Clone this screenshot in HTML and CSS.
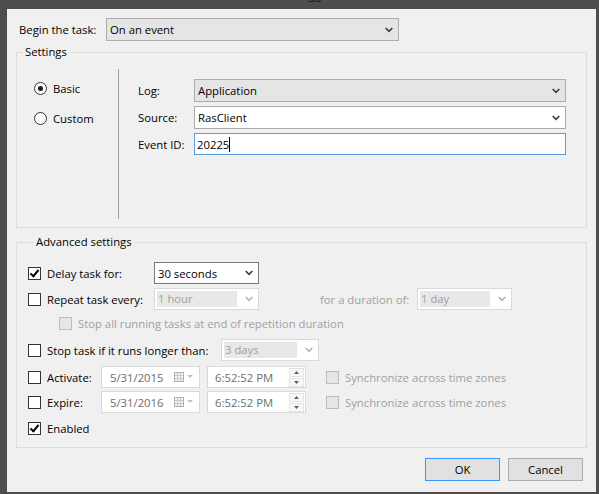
FILE: index.html
```html
<!DOCTYPE html>
<html>
<head>
    <meta charset="utf-8">
    <link rel="stylesheet" href="styles.css">
</head>
<body>
<div class="window">
    <div class="titlebar"><span class="title">Edit Trigger</span></div>

    <div class="dialog">
        <div class="begin_row">
            <span class="begin_label">Begin the task:</span>
            <div class="dropdown grey begin_select">
                <span>On an event</span>
                <svg class="chevron" width="8" height="6" viewBox="0 0 8 6"><path d="M0.7 1 L4 4.3 L7.3 1" /></svg>
            </div>
        </div>

        <!-- Settings group -->
        <fieldset class="group settings">
            <legend>Settings</legend>
            <div class="settings_body">
                <div class="radios">
                    <div class="radio_row"><span class="radio checked"></span>Basic</div>
                    <div class="radio_row"><span class="radio"></span>Custom</div>
                </div>
                <div class="separator"></div>
                <div class="fields">
                    <div class="field_row">
                        <span class="field_label">Log:</span>
                        <div class="dropdown grey field_control">
                            <span>Application</span>
                            <svg class="chevron" width="8" height="6" viewBox="0 0 8 6"><path d="M0.7 1 L4 4.3 L7.3 1" /></svg>
                        </div>
                    </div>
                    <div class="field_row">
                        <span class="field_label">Source:</span>
                        <div class="dropdown field_control">
                            <span>RasClient</span>
                            <svg class="chevron" width="8" height="6" viewBox="0 0 8 6"><path d="M0.7 1 L4 4.3 L7.3 1" /></svg>
                        </div>
                    </div>
                    <div class="field_row short">
                        <span class="field_label">Event ID:</span>
                        <div class="textbox field_control focused"><span>20225</span><span class="caret"></span></div>
                    </div>
                </div>
            </div>
        </fieldset>

        <!-- Advanced settings group -->
        <fieldset class="group advanced">
            <legend>Advanced settings</legend>

            <div class="adv_row">
                <span class="check checked"></span>
                <span class="adv_label">Delay task for:</span>
                <div class="dropdown active_select small_select">
                    <span>30 seconds</span>
                    <svg class="chevron" width="8" height="6" viewBox="0 0 8 6"><path d="M0.7 1 L4 4.3 L7.3 1" /></svg>
                </div>
            </div>

            <div class="adv_row">
                <span class="check"></span>
                <span class="adv_label">Repeat task every:</span>
                <div class="dropdown disabled small_select">
                    <span class="value_box">1 hour</span>
                    <svg class="chevron" width="8" height="6" viewBox="0 0 8 6"><path d="M0.7 1 L4 4.3 L7.3 1" /></svg>
                </div>
                <span class="muted duration_label">for a duration of:</span>
                <div class="dropdown disabled duration_select">
                    <span class="value_box">1 day</span>
                    <svg class="chevron" width="8" height="6" viewBox="0 0 8 6"><path d="M0.7 1 L4 4.3 L7.3 1" /></svg>
                </div>
            </div>

            <div class="adv_row sub_row">
                <span class="check off"></span>
                <span class="muted">Stop all running tasks at end of repetition duration</span>
            </div>

            <div class="adv_row gap5">
                <span class="check"></span>
                <span class="adv_label long_label">Stop task if it runs longer than:</span>
                <div class="dropdown disabled stop_select">
                    <span class="value_box">3 days</span>
                    <svg class="chevron" width="8" height="6" viewBox="0 0 8 6"><path d="M0.7 1 L4 4.3 L7.3 1" /></svg>
                </div>
            </div>

            <div class="adv_row gap5">
                <span class="check"></span>
                <span class="adv_label date_label">Activate:</span>
                <div class="picker date_picker">
                    <span>5/31/2015</span>
                    <span class="cal_icon"></span>
                    <svg class="cal_arrow" width="6" height="4" viewBox="0 0 6 4"><path d="M0 0 H6 L3 3 Z" /></svg>
                </div>
                <div class="picker time_picker">
                    <span>6:52:52 PM</span>
                    <div class="spinner">
                        <span class="spin"><svg width="5" height="3" viewBox="0 0 5 3"><path d="M0 3 H5 L2.5 0 Z" /></svg></span>
                        <span class="spin"><svg width="5" height="3" viewBox="0 0 5 3"><path d="M0 0 H5 L2.5 3 Z" /></svg></span>
                    </div>
                </div>
                <span class="check off sync_check"></span>
                <span class="muted">Synchronize across time zones</span>
            </div>

            <div class="adv_row gap3">
                <span class="check"></span>
                <span class="adv_label date_label">Expire:</span>
                <div class="picker date_picker">
                    <span>5/31/2016</span>
                    <span class="cal_icon"></span>
                    <svg class="cal_arrow" width="6" height="4" viewBox="0 0 6 4"><path d="M0 0 H6 L3 3 Z" /></svg>
                </div>
                <div class="picker time_picker">
                    <span>6:52:52 PM</span>
                    <div class="spinner">
                        <span class="spin"><svg width="5" height="3" viewBox="0 0 5 3"><path d="M0 3 H5 L2.5 0 Z" /></svg></span>
                        <span class="spin"><svg width="5" height="3" viewBox="0 0 5 3"><path d="M0 0 H5 L2.5 3 Z" /></svg></span>
                    </div>
                </div>
                <span class="check off sync_check"></span>
                <span class="muted">Synchronize across time zones</span>
            </div>

            <div class="adv_row gap4">
                <span class="check checked"></span>
                <span>Enabled</span>
            </div>
        </fieldset>

        <div class="buttons">
            <div class="button default">OK</div>
            <div class="button">Cancel</div>
        </div>
    </div>
</div>
</body>
</html>
```

FILE: styles.css
```css
/*Page and window frame.*/
body {
    margin: 0;
    background-color: #4d4d4d;
    font-family: "Open Sans", "Noto Sans", sans-serif;
    font-size: 11.3px;
    color: #000000;
}

.window {
    width: 599px;
    height: 494px;
    box-sizing: border-box;
    padding: 0 3px 2px 7px;
    display: flex;
    flex-direction: column;
}

.titlebar {
    height: 9px;
    overflow: hidden;
}

.title {
    display: block;
    margin-top: -13px;
    padding-left: 262px;
    line-height: 16px;
    font-size: 12px;
    color: #1a1a1a;
}

.dialog {
    flex: 1;
    background-color: #f0f0f0;
    padding: 9px 9px 0 9px;
}

/*Begin the task row.*/
.begin_row {
    display: flex;
    align-items: center;
    height: 23px;
}

.begin_label {
    width: 90px;
    padding-left: 3px;
    box-sizing: border-box;
}

.begin_select {
    width: 293px;
    height: 23px;
}

/*Drop downs and text boxes.*/
.dropdown {
    display: flex;
    align-items: center;
    justify-content: space-between;
    box-sizing: border-box;
    border: 1px solid #acacac;
    background-color: #ffffff;
    padding: 0 5px 0 3px;
}

.dropdown.grey {
    background-color: #e5e5e5;
}

.chevron path {
    fill: none;
    stroke: #3c3c3c;
    stroke-width: 1.7;
}

.dropdown.disabled {
    border-color: #d9d9d9;
    color: #a0a0a0;
    padding-left: 2px;
}

.dropdown.disabled .chevron path {
    stroke: #b4b4b4;
}

.value_box {
    background-color: #e8e8e8;
    height: 16px;
    line-height: 16px;
    padding-left: 1px;
    flex: 1;
    margin-right: 8px;
}

.active_select {
    border-color: #7a7a7a;
}

.textbox {
    display: flex;
    align-items: center;
    box-sizing: border-box;
    border: 1px solid #acacac;
    background-color: #ffffff;
    padding-left: 2px;
}

.textbox.focused {
    border-color: #569de5;
}

.caret {
    width: 1px;
    height: 15px;
    background-color: #000000;
}

/*Group boxes.*/
.group {
    margin: 0;
    padding: 0;
    min-width: 0;
    border: 1px solid #dcdcdc;
}

.group legend {
    margin-left: 6px;
    padding: 0 2px;
    line-height: 14px;
}

.settings {
    margin-top: 4px;
}

.settings_body {
    display: flex;
    height: 168px;
}

.radios {
    width: 101px;
    padding: 21px 0 0 17px;
    box-sizing: border-box;
    display: flex;
    flex-direction: column;
    gap: 14px;
}

.radio_row {
    display: flex;
    align-items: center;
    height: 16px;
}

.radio {
    width: 13px;
    height: 13px;
    box-sizing: border-box;
    border: 1px solid #333333;
    border-radius: 50%;
    background-color: #ffffff;
    margin-right: 6px;
    display: flex;
    align-items: center;
    justify-content: center;
}

.radio.checked::after {
    content: "";
    width: 5px;
    height: 5px;
    border-radius: 50%;
    background-color: #1a1a1a;
}

.separator {
    width: 1px;
    height: 150px;
    margin-top: 10px;
    background-color: #a0a0a0;
}

.fields {
    flex: 1;
    padding: 20px 0 0 19px;
    display: flex;
    flex-direction: column;
    gap: 4px;
}

.field_row {
    display: flex;
    align-items: center;
    height: 23px;
}

.field_row.short {
    height: 22px;
}

.field_label {
    width: 56px;
}

.field_control {
    width: 372px;
    height: 100%;
}

/*Advanced settings rows.*/
.advanced {
    margin-top: 7px;
    padding: 13px 0 8px 11px;
}

.adv_row {
    display: flex;
    align-items: center;
    height: 22px;
    margin-top: 4px;
}

.adv_row:first-of-type {
    margin-top: 0;
}

.sub_row {
    margin-top: 2px;
    padding-left: 31px;
}

.gap5 {
    margin-top: 5px;
}

.gap3 {
    margin-top: 3px;
}

.check {
    width: 13px;
    height: 13px;
    box-sizing: border-box;
    border: 1px solid #333333;
    background-color: #ffffff;
    margin-right: 6px;
    flex-shrink: 0;
    position: relative;
}

.check.checked::after {
    content: "";
    position: absolute;
    left: 3px;
    top: 0px;
    width: 3px;
    height: 7px;
    border: solid #000000;
    border-width: 0 2px 2px 0;
    transform: rotate(40deg);
}

.check.off {
    border-color: #bcbcbc;
    background-color: #e6e6e6;
}

.muted {
    color: #a0a0a0;
}

.adv_label {
    width: 107px;
}

.long_label {
    width: 174px;
}

.date_label {
    width: 54px;
}

.small_select {
    width: 105px;
    height: 22px;
}

.duration_label {
    margin-left: 61px;
    width: 97px;
}

.duration_select {
    width: 95px;
    height: 22px;
}

.stop_select {
    width: 98px;
    height: 22px;
}

/*Date and time pickers.*/
.picker {
    display: flex;
    align-items: center;
    box-sizing: border-box;
    width: 99px;
    height: 22px;
    border: 1px solid #dadada;
    background-color: #ffffff;
    color: #6d6d6d;
    padding-left: 8px;
}

.date_picker span:first-child {
    flex: 1;
}

.cal_icon {
    width: 10px;
    height: 10px;
    box-sizing: border-box;
    border: 1px solid #b0b0b0;
    background-image:
        linear-gradient(90deg, transparent 2px, #c8c8c8 2px, #c8c8c8 3px, transparent 3px, transparent 5px, #c8c8c8 5px, #c8c8c8 6px, transparent 6px),
        linear-gradient(transparent 2px, #c8c8c8 2px, #c8c8c8 3px, transparent 3px, transparent 5px, #c8c8c8 5px, #c8c8c8 6px, transparent 6px);
    background-color: #f4f4f4;
    margin-right: 3px;
}

.cal_arrow {
    margin-right: 6px;
}

.cal_arrow path {
    fill: #c0c0c0;
}

.time_picker {
    margin-left: 7px;
    padding-left: 7px;
    justify-content: space-between;
}

.spinner {
    display: flex;
    flex-direction: column;
    gap: 1px;
    margin-right: 1px;
}

.spin {
    width: 15px;
    height: 9px;
    box-sizing: border-box;
    border: 1px solid #e3e3e3;
    background-color: #f7f7f7;
    display: flex;
    align-items: center;
    justify-content: center;
}

.spin path {
    fill: #606060;
}

.sync_check {
    margin-left: 20px;
}

/*Dialog buttons.*/
.buttons {
    display: flex;
    justify-content: flex-end;
    gap: 8px;
    margin-top: 10px;
    padding-right: 4px;
}

.button {
    width: 75px;
    height: 23px;
    box-sizing: border-box;
    border: 1px solid #adadad;
    background-color: #e1e1e1;
    display: flex;
    align-items: center;
    justify-content: center;
}

.button.default {
    border-color: #3399ff;
}
```
